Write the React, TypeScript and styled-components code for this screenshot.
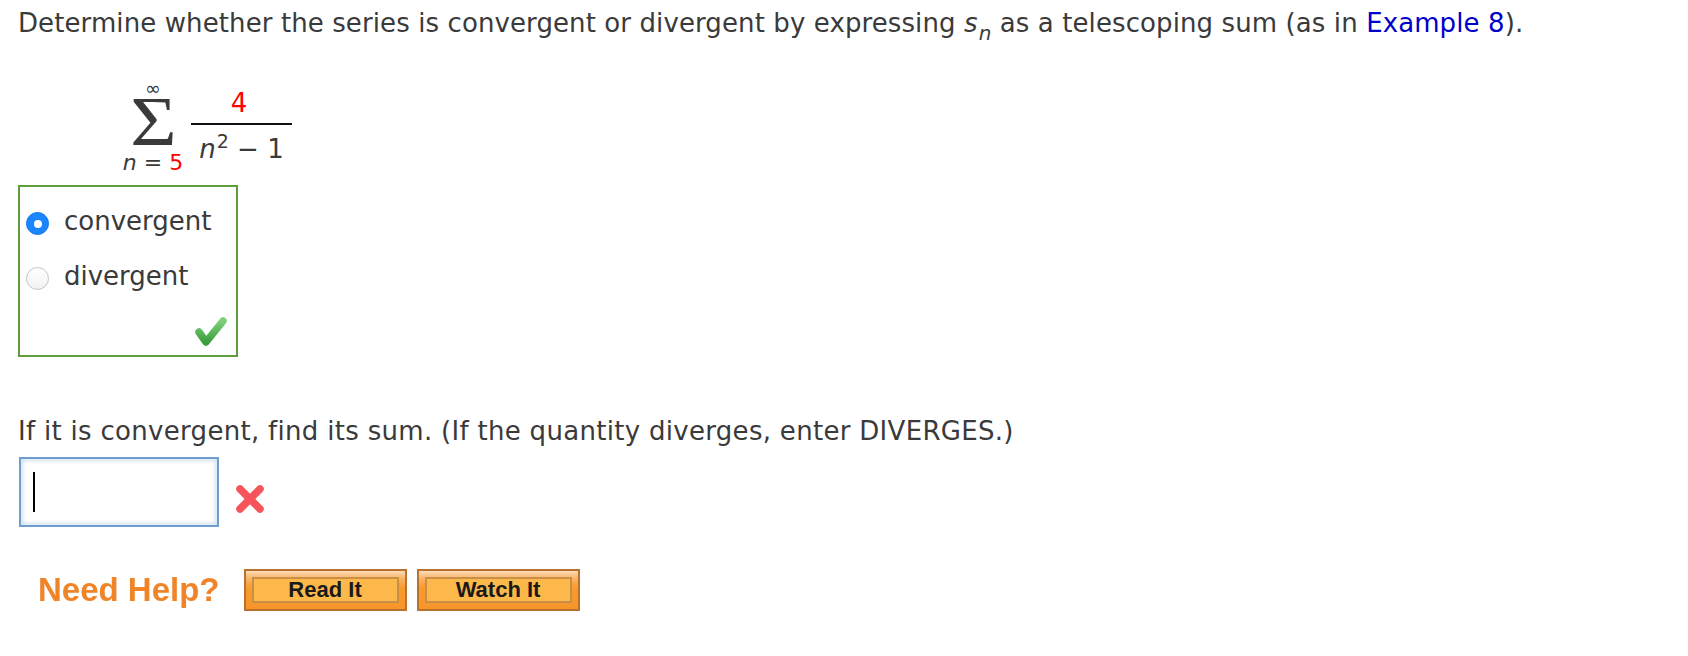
import React from "react";
import styled, { createGlobalStyle } from "styled-components";

const Global = createGlobalStyle`
  html, body { margin: 0; padding: 0; background: #ffffff; }
  body { font-family: "DejaVu Sans", Verdana, sans-serif; color: #3a3a3a; }
`;

const Page = styled.div`
  padding: 7px 0 0 18px;
  font-size: 26px;
  line-height: 32px;
`;

const Prompt = styled.p<{ $top?: number; $spacing?: number }>`
  margin: ${(p) => p.$top ?? 0}px 0 0 0;
  white-space: nowrap;
  letter-spacing: ${(p) => p.$spacing ?? 0}px;
`;

const Var = styled.i`
  font-style: italic;
`;

const Sub = styled.sub`
  font-size: 20px;
  font-style: italic;
  vertical-align: -8px;
  line-height: 0;
  margin-left: 1px;
`;

const Link = styled.span`
  color: #0000cc;
`;

const SumRow = styled.div`
  display: flex;
  align-items: flex-start;
  margin: 42px 0 0 105px;
`;

const SumColumn = styled.div`
  width: 60px;
  display: flex;
  flex-direction: column;
  align-items: center;
`;

const Infinity = styled.div`
  font-size: 19px;
  line-height: 14px;
  height: 14px;
`;

const Sigma = styled.div`
  font-family: "Liberation Serif", "Times New Roman", serif;
  font-size: 70px;
  line-height: 54px;
  height: 54px;
  color: #3a3a3a;
  transform: scaleX(1.14);
`;

const Lower = styled.div`
  font-size: 22px;
  line-height: 28px;
  white-space: nowrap;
`;

const Red = styled.span`
  color: #ff0000;
`;

const Fraction = styled.div`
  margin: 7px 0 0 8px;
  width: 101px;
  display: flex;
  flex-direction: column;
  align-items: center;
`;

const Numerator = styled.div`
  line-height: 30px;
  color: #ff0000;
  padding-right: 5px;
`;

const Bar = styled.div`
  align-self: stretch;
  height: 2px;
  background: #111;
  margin: 5px 0 9px 0;
`;

const Denominator = styled.div`
  line-height: 30px;
  white-space: nowrap;
`;

const Sup = styled.sup`
  font-size: 19px;
  vertical-align: 10px;
  line-height: 0;
  margin-left: 1px;
`;

const ChoiceBox = styled.div`
  box-sizing: border-box;
  width: 220px;
  height: 172px;
  margin-top: 8px;
  border: 2px solid #5b9e3b;
  padding: 6px 0 0 6px;
  display: flex;
  flex-direction: column;
`;

const RadioRow = styled.label`
  display: flex;
  align-items: center;
  gap: 15px;
  height: 55px;
  color: #3a3a3a;
`;

const Radio = styled.span<{ $on?: boolean }>`
  box-sizing: border-box;
  width: 23px;
  height: 23px;
  margin-top: 6px;
  border-radius: 50%;
  flex: none;
  display: flex;
  align-items: center;
  justify-content: center;
  ${(p) =>
    p.$on
      ? `background: #1a85ff; border: 1px solid #1379ea;`
      : `background: linear-gradient(#ffffff, #f2f2f2); border: 1px solid #c4c4c4;`}
  &::after {
    content: "";
    width: 8px;
    height: 8px;
    border-radius: 50%;
    background: #ffffff;
    display: ${(p) => (p.$on ? "block" : "none")};
  }
`;

const CheckRow = styled.div`
  margin-top: auto;
  display: flex;
  justify-content: flex-end;
  padding: 0 9px 8px 0;
`;

const InputRow = styled.div`
  display: flex;
  align-items: flex-start;
  margin-top: 10px;
`;

const AnswerBox = styled.div`
  box-sizing: border-box;
  width: 200px;
  height: 70px;
  margin-left: 1px;
  border: 2px solid #709dcd;
  box-shadow: inset 0 0 4px 2px #d3e3f4;
  background: #ffffff;
  display: flex;
  align-items: center;
  padding-left: 12px;
`;

const Caret = styled.span`
  width: 2px;
  height: 40px;
  background: #000000;
`;

const Cross = styled.span`
  margin: 27px 0 0 16px;
  display: flex;
  filter: blur(0.4px);
`;

const HelpRow = styled.div`
  display: flex;
  align-items: center;
  margin-top: 42px;
  padding-left: 20px;
`;

const NeedHelp = styled.span`
  font-family: "Liberation Sans", Arial, sans-serif;
  font-weight: bold;
  font-size: 33px;
  line-height: 40px;
  color: #ef8428;
  margin-right: 24px;
  filter: blur(0.3px);
`;

const HelpButton = styled.button`
  box-sizing: border-box;
  width: 163px;
  height: 42px;
  padding: 6px;
  margin-right: 10px;
  border: 2px solid #b9722d;
  background: linear-gradient(#fbdcb6 0%, #f9b062 22%, #f89a2d 45%, #f7952a 100%);
  display: flex;
  cursor: pointer;
`;

const ButtonFace = styled.span`
  flex: 1;
  border: 2px solid #c98f47;
  background: #fdb84b;
  display: flex;
  align-items: center;
  justify-content: center;
  font-family: "Liberation Sans", Arial, sans-serif;
  font-weight: bold;
  font-size: 22px;
  color: #1a1a1a;
`;

const CheckMark = () => (
  <svg width="32" height="32" viewBox="0 0 32 32">
    <defs>
      <linearGradient id="chk" x1="0" y1="0" x2="0" y2="1">
        <stop offset="0" stopColor="#7fd07b" />
        <stop offset="1" stopColor="#3b9e3e" />
      </linearGradient>
    </defs>
    <polyline
      points="4,17 11,27 28,6"
      fill="none"
      stroke="url(#chk)"
      strokeWidth="7.5"
      strokeLinecap="round"
      strokeLinejoin="round"
    />
  </svg>
);

const RedCross = () => (
  <svg width="30" height="30" viewBox="0 0 30 30">
    <g stroke="#f5474c" strokeWidth="7.5" strokeLinecap="round" opacity="0.92">
      <line x1="5" y1="5" x2="25" y2="25" />
      <line x1="25" y1="5" x2="5" y2="25" />
    </g>
  </svg>
);

export default function App() {
  return (
    <>
      <Global />
      <Page>
        <Prompt $spacing={0.1}>
          Determine whether the series is convergent or divergent by expressing{" "}
          <Var>s</Var>
          <Sub>n</Sub> as a telescoping sum (as in <Link>Example 8</Link>).
        </Prompt>

        <SumRow>
          <SumColumn>
            <Infinity>∞</Infinity>
            <Sigma>Σ</Sigma>
            <Lower>
              <Var>n</Var> = <Red>5</Red>
            </Lower>
          </SumColumn>
          <Fraction>
            <Numerator>4</Numerator>
            <Bar />
            <Denominator>
              <Var>n</Var>
              <Sup>2</Sup> − 1
            </Denominator>
          </Fraction>
        </SumRow>

        <ChoiceBox>
          <RadioRow>
            <Radio $on />
            convergent
          </RadioRow>
          <RadioRow>
            <Radio />
            divergent
          </RadioRow>
          <CheckRow>
            <CheckMark />
          </CheckRow>
        </ChoiceBox>

        <Prompt $top={58} $spacing={0.3}>
          If it is convergent, find its sum. (If the quantity diverges, enter DIVERGES.)
        </Prompt>

        <InputRow>
          <AnswerBox>
            <Caret />
          </AnswerBox>
          <Cross>
            <RedCross />
          </Cross>
        </InputRow>

        <HelpRow>
          <NeedHelp>Need Help?</NeedHelp>
          <HelpButton>
            <ButtonFace>Read It</ButtonFace>
          </HelpButton>
          <HelpButton>
            <ButtonFace>Watch It</ButtonFace>
          </HelpButton>
        </HelpRow>
      </Page>
    </>
  );
}
